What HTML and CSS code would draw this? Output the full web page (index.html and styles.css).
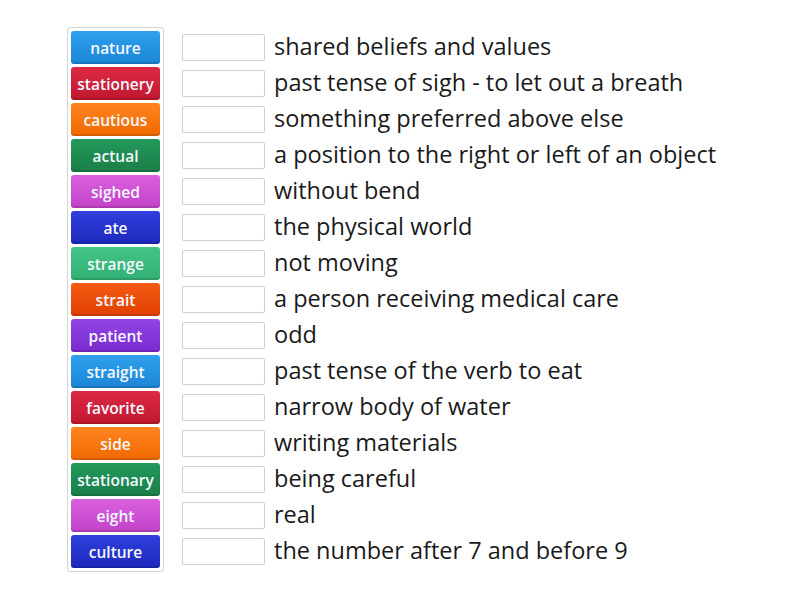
FILE: index.html
```html
<!DOCTYPE html>
<html lang="en">
<head>
<meta charset="utf-8">
<title>Match up</title>
<link rel="stylesheet" href="styles.css">
</head>
<body>
<div class="activity">
  <div class="bank">
    <div class="tile c-blue">nature</div>
    <div class="tile c-red">stationery</div>
    <div class="tile c-orange">cautious</div>
    <div class="tile c-green">actual</div>
    <div class="tile c-magenta">sighed</div>
    <div class="tile c-indigo">ate</div>
    <div class="tile c-teal">strange</div>
    <div class="tile c-redorange">strait</div>
    <div class="tile c-purple">patient</div>
    <div class="tile c-blue">straight</div>
    <div class="tile c-red">favorite</div>
    <div class="tile c-orange">side</div>
    <div class="tile c-green">stationary</div>
    <div class="tile c-magenta">eight</div>
    <div class="tile c-indigo">culture</div>
  </div>
  <div class="rows">
    <div class="row"><div class="slot"></div><span class="def">shared beliefs and values</span></div>
    <div class="row"><div class="slot"></div><span class="def">past tense of sigh - to let out a breath</span></div>
    <div class="row"><div class="slot"></div><span class="def">something preferred above else</span></div>
    <div class="row"><div class="slot"></div><span class="def">a position to the right or left of an object</span></div>
    <div class="row"><div class="slot"></div><span class="def">without bend</span></div>
    <div class="row"><div class="slot"></div><span class="def">the physical world</span></div>
    <div class="row"><div class="slot"></div><span class="def">not moving</span></div>
    <div class="row"><div class="slot"></div><span class="def">a person receiving medical care</span></div>
    <div class="row"><div class="slot"></div><span class="def">odd</span></div>
    <div class="row"><div class="slot"></div><span class="def">past tense of the verb to eat</span></div>
    <div class="row"><div class="slot"></div><span class="def">narrow body of water</span></div>
    <div class="row"><div class="slot"></div><span class="def">writing materials</span></div>
    <div class="row"><div class="slot"></div><span class="def">being careful</span></div>
    <div class="row"><div class="slot"></div><span class="def">real</span></div>
    <div class="row"><div class="slot"></div><span class="def">the number after 7 and before 9</span></div>
  </div>
</div>
</body>
</html>
```
FILE: styles.css
```css
html, body {
  margin: 0;
  padding: 0;
  background: #ffffff;
}
body {
  font-family: "Open Sans", "Noto Sans", Lato, sans-serif;
  color: #1a1a1a;
}
.activity {
  display: flex;
  align-items: flex-start;
  padding: 27px 0 0 67px;
}
.bank {
  display: flex;
  flex-direction: column;
  gap: 3px;
  padding: 3px;
  border: 1px solid #d4d4d4;
  border-radius: 3px;
}
.tile {
  width: 89px;
  height: 33px;
  box-sizing: border-box;
  border-radius: 3px;
  color: #f4f8ff;
  font-size: 15.5px;
  font-weight: 600;
  display: flex;
  align-items: center;
  justify-content: center;
  box-shadow: inset 0 -2px 0 rgba(0, 0, 0, 0.12);
}
.c-blue { background: linear-gradient(#2ea0ee, #1c86d6); }
.c-red { background: linear-gradient(#dc2a44, #c0182f); }
.c-orange { background: linear-gradient(#ff8420, #f06a00); }
.c-green { background: linear-gradient(#23995c, #1a7e47); }
.c-magenta { background: linear-gradient(#da60de, #c242c8); }
.c-indigo { background: linear-gradient(#3040dc, #1e28bc); }
.c-teal { background: linear-gradient(#44c488, #33b074); }
.c-redorange { background: linear-gradient(#f55a14, #e04000); }
.c-purple { background: linear-gradient(#9244e4, #7a2acf); }
.rows {
  display: flex;
  flex-direction: column;
  gap: 3px;
  margin-left: 18px;
  padding-top: 4px;
}
.row {
  display: flex;
  align-items: center;
  height: 33px;
}
.slot {
  width: 83px;
  height: 27px;
  box-sizing: border-box;
  border: 1px solid #cfcfcf;
  border-radius: 2px;
  background: #fff;
  flex: none;
}
.def {
  margin-left: 9px;
  font-size: 23.5px;
  line-height: 27px;
  margin-top: -3px;
  white-space: nowrap;
}
```
